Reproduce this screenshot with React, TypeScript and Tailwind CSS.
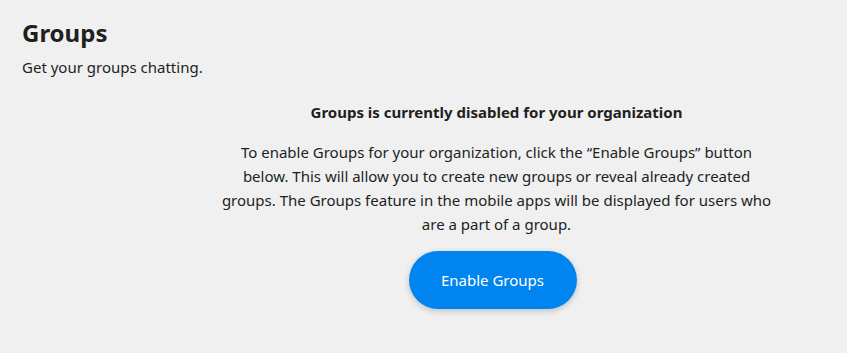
import React from "react";

const App = () => {
  return (
    <div
      className="w-[847px] h-[353px] bg-[#f0f0f0] text-[#201f1e] overflow-hidden"
      style={{ fontFamily: '"Noto Sans", "Open Sans", sans-serif' }}
    >
      <div className="px-[22px] pt-[17px]">
        <h1 className="text-[24px] font-bold leading-[32px]">Groups</h1>
        <p className="text-[15px] leading-[20px] mt-[8px]">Get your groups chatting.</p>
      </div>
      <div className="flex flex-col items-center pl-[146px] mt-[25px]">
        <h2 className="text-[15px] font-bold leading-[20px]">
          Groups is currently disabled for your organization
        </h2>
        <p className="w-[600px] text-center text-[15px] leading-[24px] mt-[18px]">
          To enable Groups for your organization, click the “Enable Groups” button
          <br />
          below. This will allow you to create new groups or reveal already created
          <br />
          groups. The Groups feature in the mobile apps will be displayed for users who
          <br />
          are a part of a group.
        </p>
        <button className="mt-[15px] w-[168px] h-[58px] rounded-full bg-[#0084f0] text-white text-[15px] shadow-[0_2px_6px_rgba(0,0,0,0.2)] -ml-[8px]">
          Enable Groups
        </button>
      </div>
    </div>
  );
};

export default App;
